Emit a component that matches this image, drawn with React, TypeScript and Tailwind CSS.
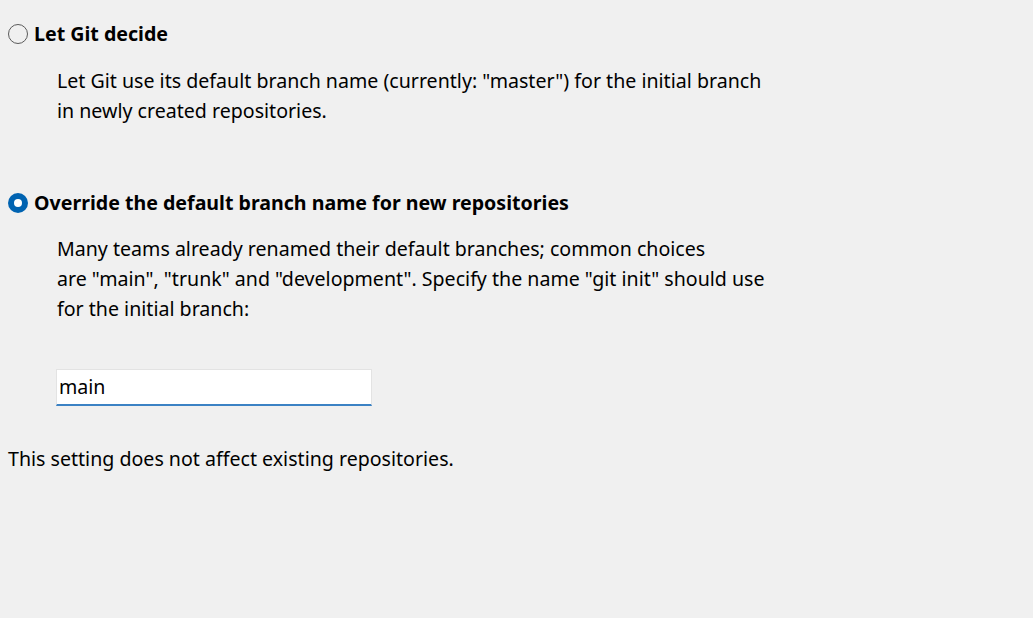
import React from "react";

export default function App() {
  return (
    <div className="w-[1033px] h-[618px] bg-[#f0f0f0] text-black overflow-hidden" style={{ fontFamily: '"Noto Sans", "Open Sans", sans-serif' }}>
      <div className="pt-[19px] pl-[8px]">
        <label className="flex items-center h-[30px] gap-[6px]">
          <span className="w-[20px] h-[20px] rounded-full border border-[#5a5a5a] bg-[#f0f0f0]" />
          <span className="font-bold text-[19.6px]">Let Git decide</span>
        </label>
        <div className="pl-[49px] pt-[17px] text-[19.6px] leading-[30px]">
          <div>Let Git use its default branch name (currently: "master") for the initial branch</div>
          <div>in newly created repositories.</div>
        </div>
        <label className="flex items-center h-[30px] gap-[6px] mt-[62px]">
          <span className="w-[20px] h-[20px] rounded-full bg-[#0063b1] flex items-center justify-center">
            <span className="w-[8px] h-[8px] rounded-full bg-white" />
          </span>
          <span className="font-bold text-[19.6px]">Override the default branch name for new repositories</span>
        </label>
        <div className="pl-[49px] pt-[16px] text-[19.6px] leading-[30px]">
          <div>Many teams already renamed their default branches; common choices</div>
          <div>are "main", "trunk" and "development". Specify the name "git init" should use</div>
          <div>for the initial branch:</div>
        </div>
        <div className="pl-[48px] pt-[45px]">
          <div className="w-[316px] h-[37px] bg-white border border-[#e3e3e3] border-b-2 border-b-[#3b82c4] flex items-center pl-[2px] text-[19.6px]">
            main
          </div>
        </div>
        <div className="pt-[38px] text-[19.6px] leading-[30px]">This setting does not affect existing repositories.</div>
      </div>
    </div>
  );
}
